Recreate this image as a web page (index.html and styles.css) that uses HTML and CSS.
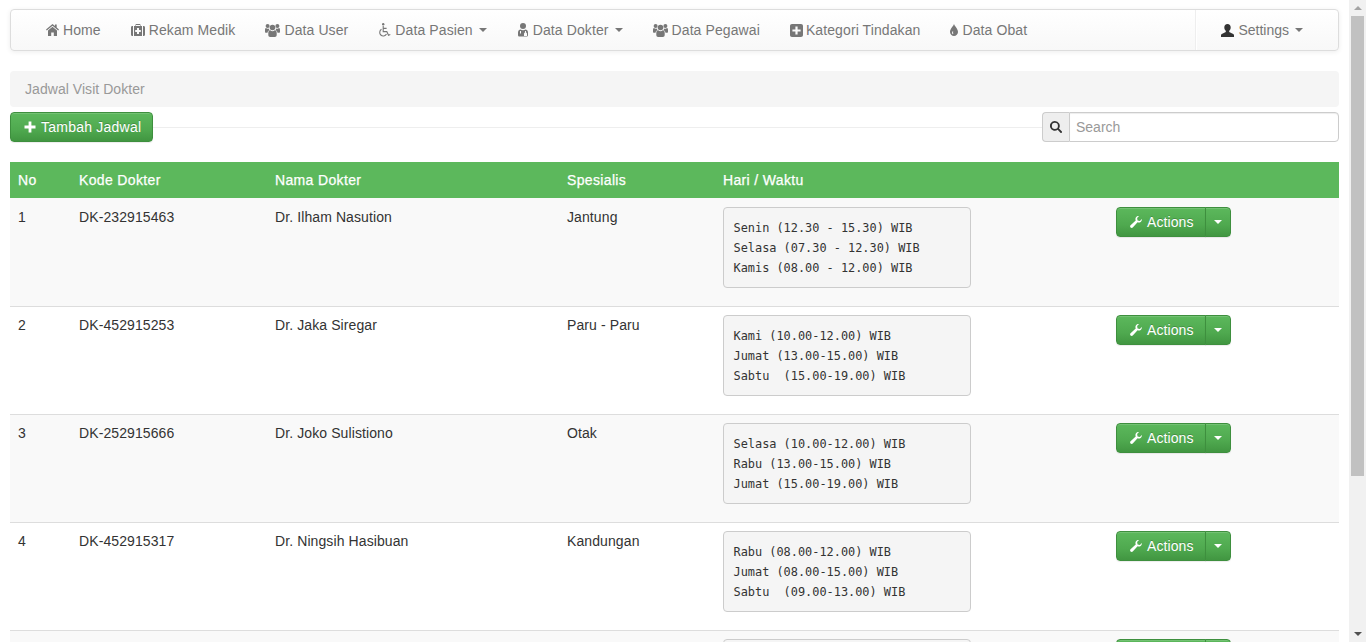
FILE: index.html
```html
<!DOCTYPE html>
<html lang="id">
<head>
<meta charset="utf-8">
<title>Jadwal Visit Dokter</title>
<link rel="stylesheet" href="styles.css">
</head>
<body>
<div class="page">
  <nav class="navbar">
    <ul class="nav">
      <li><a href="#"><svg class="ic w13" viewBox="0 0 13 12"><path d="M6.5 0 0 5.6l.8.9L6.5 1.700l5.700 4.800.8-.9-2.300-2V.6H9v1.500z"/><path d="M2 6.600 6.500 2.800 11 6.600V12H7.800V8.400H5.200V12H2z"/></svg>Home</a></li>
      <li><a href="#"><svg class="ic w14" viewBox="0 0 14 12"><path d="M4.500 2V.8C4.500.3 4.900 0 5.300 0h3.400c.4 0 .8.3.8.8V2H9V.9H5V2z"/><path d="M0 3.500C0 2.600.5 2 1.300 2H2v10h-.7C.5 12 0 11.400 0 10.500zM12 2h.7c.8 0 1.300.6 1.300 1.500v7c0 .9-.5 1.500-1.300 1.500H12z"/><path fill-rule="evenodd" d="M3 2h8v10H3zM6 4v2H4.200v2H6v2h2V8h1.800V6H8V4z"/></svg>Rekam Medik</a></li>
      <li><a href="#"><svg class="ic w15" viewBox="0 0 15 13"><circle cx="7.500" cy="3.500" r="2.800"/><circle cx="2.600" cy="2" r="2"/><circle cx="12.400" cy="2" r="2"/><path d="M3.300 9C3.300 7 4.300 6.300 5.300 6.300c.6.600 1.300.9 2.200.9s1.600-.3 2.200-.9c1 0 2 .7 2 2.700v2c0 1.300-.8 2-1.800 2H5.100c-1 0-1.800-.7-1.800-2z"/><path d="M0 6c0-1.400.6-2 1-2 .5.500 1 .7 1.700.7.400 0 .8-.1 1.100-.2 0 .8.400 1.400.9 1.800C3.600 6.600 2.700 7.500 2.500 8.700H1C.4 8.700 0 8.300 0 7.700zM15 6c0-1.400-.6-2-1-2-.5.500-1 .7-1.700.7-.4 0-.8-.1-1.100-.2 0 .8-.4 1.400-.9 1.800 1.100.3 2 1.200 2.200 2.400H14c.6 0 1-.4 1-1z"/></svg>Data User</a></li>
      <li><a href="#"><svg class="ic w13" viewBox="0 0 13 14"><circle cx="5.200" cy="1.300" r="1.200"/><path class="thin" d="M5.200 3v5.600h3.600l1.700 3.600 1.800-.7M5.200 5.400h3.400"/><path class="thin" d="M3.500 6.300a3.600 3.600 0 1 0 5 4.800"/></svg>Data Pasien<span class="caret"></span></a></li>
      <li><a href="#"><svg class="ic w12" viewBox="0 0 12 14"><circle cx="6" cy="3" r="3"/><path fill-rule="evenodd" d="M1 9.500C1 7.500 2.300 6.500 3.500 6.500c.7.500 1.500.8 2.500.8s1.800-.3 2.500-.8c1.200 0 2.500 1 2.500 3V12c0 1-.7 1.500-1.500 1.500h-7C1.700 13.500 1 13 1 12zM3 8v2.500h1V8zM8 8v1.300L7 10.500V13h3v-2.500L9 9.300V8z"/></svg>Data Dokter<span class="caret"></span></a></li>
      <li><a href="#"><svg class="ic w15" viewBox="0 0 15 13"><circle cx="7.500" cy="3.500" r="2.800"/><circle cx="2.600" cy="2" r="2"/><circle cx="12.400" cy="2" r="2"/><path d="M3.300 9C3.300 7 4.300 6.300 5.300 6.300c.6.600 1.300.9 2.200.9s1.600-.3 2.200-.9c1 0 2 .7 2 2.700v2c0 1.300-.8 2-1.800 2H5.100c-1 0-1.800-.7-1.800-2z"/><path d="M0 6c0-1.400.6-2 1-2 .5.500 1 .7 1.700.7.400 0 .8-.1 1.100-.2 0 .8.400 1.400.9 1.800C3.600 6.600 2.700 7.500 2.500 8.700H1C.4 8.700 0 8.300 0 7.700zM15 6c0-1.400-.6-2-1-2-.5.500-1 .7-1.700.7-.4 0-.8-.1-1.100-.2 0 .8-.4 1.400-.9 1.800 1.100.3 2 1.200 2.200 2.400H14c.6 0 1-.4 1-1z"/></svg>Data Pegawai</a></li>
      <li><a href="#"><svg class="ic w12b" viewBox="0 0 13 13"><path fill-rule="evenodd" d="M2 0h9c1.200 0 2 .8 2 2v9c0 1.200-.8 2-2 2H2c-1.200 0-2-.8-2-2V2C0 .8.800 0 2 0zM5.400 2.500v3h-3v2h3v3h2.200v-3h3v-2h-3v-3z"/></svg>Kategori Tindakan</a></li>
      <li><a href="#"><svg class="ic w8" viewBox="0 0 8 12"><path fill-rule="evenodd" d="M4 0c.5 2 4 4.800 4 8 0 2.300-1.800 4-4 4S0 10.300 0 8C0 4.800 3.500 2 4 0zM2.700 7.300C2 8 1.700 9.300 2.800 10.300l.6-.5c-.6-.7-.4-1.500-.1-2z"/></svg>Data Obat</a></li>
    </ul>
    <ul class="nav nav-right">
      <li><a href="#"><svg class="ic w13 dark" viewBox="0 0 13 13"><path d="M6.500 0c2 0 3.200 1.400 3.200 3.400 0 1.500-.7 2.800-1.500 3.400v1.300l4 1.900c.5.300.8.700.8 1.300V13H0v-1.700c0-.6.300-1 .8-1.300l4-1.900V6.800C4 6.200 3.300 4.900 3.300 3.400 3.300 1.400 4.500 0 6.500 0z"/></svg>Settings<span class="caret"></span></a></li>
    </ul>
  </nav>

  <div class="breadcrumb">Jadwal Visit Dokter</div>

  <div class="toolbar">
    <a class="btn btn-add" href="#"><svg class="ic w12 light" viewBox="0 0 12 12"><path d="M4.600 .5h2.800v4.100h4.100v2.800H7.400v4.100H4.600V7.400H.5V4.600h4.100z"/></svg>Tambah Jadwal</a>
    <div class="rule"></div>
    <div class="search">
      <span class="addon"><svg class="ic w12 dark" viewBox="0 0 13 13"><path fill-rule="evenodd" d="M5.300 0a5.300 5.300 0 0 1 4.400 8.200l3 3c.4.400.4 1 0 1.400-.4.400-1 .4-1.400 0l-3-3A5.300 5.300 0 1 1 5.300 0zm0 2a3.300 3.300 0 1 0 0 6.600 3.300 3.300 0 0 0 0-6.600z"/></svg></span>
      <input class="search-input" type="text" placeholder="Search">
    </div>
  </div>

  <table class="table">
    <colgroup>
      <col class="c-no"><col class="c-kode"><col class="c-nama"><col class="c-spes"><col class="c-hari"><col class="c-act">
    </colgroup>
    <thead>
      <tr><th>No</th><th>Kode Dokter</th><th>Nama Dokter</th><th>Spesialis</th><th>Hari / Waktu</th><th></th></tr>
    </thead>
    <tbody>
      <tr>
        <td>1</td><td>DK-232915463</td><td>Dr. Ilham Nasution</td><td>Jantung</td>
        <td><pre>Senin (12.30 - 15.30) WIB
Selasa (07.30 - 12.30) WIB
Kamis (08.00 - 12.00) WIB</pre></td>
        <td><div class="btn-group"><a class="btn" href="#"><svg class="ic w12 light" viewBox="0 0 13 13"><path d="M12.800 3.200c.3 1.600-.4 3-1.700 3.600-1 .5-2 .4-2.900 0L3 12.400c-.7.700-1.800.7-2.400 0-.7-.6-.7-1.700 0-2.400l5.600-5.200c-.4-.9-.5-1.900 0-2.900C6.800.6 8.300-.2 9.800.1L7.700 2.300l.5 2.500 2.500.5z"/></svg>Actions</a><a class="btn btn-split" href="#"><span class="caret caret-light"></span></a></div></td>
      </tr>
      <tr>
        <td>2</td><td>DK-452915253</td><td>Dr. Jaka Siregar</td><td>Paru - Paru</td>
        <td><pre>Kami (10.00-12.00) WIB
Jumat (13.00-15.00) WIB
Sabtu  (15.00-19.00) WIB</pre></td>
        <td><div class="btn-group"><a class="btn" href="#"><svg class="ic w12 light" viewBox="0 0 13 13"><path d="M12.800 3.200c.3 1.600-.4 3-1.700 3.600-1 .5-2 .4-2.900 0L3 12.400c-.7.700-1.800.7-2.400 0-.7-.6-.7-1.700 0-2.400l5.600-5.200c-.4-.9-.5-1.900 0-2.900C6.800.6 8.300-.2 9.800.1L7.700 2.300l.5 2.500 2.500.5z"/></svg>Actions</a><a class="btn btn-split" href="#"><span class="caret caret-light"></span></a></div></td>
      </tr>
      <tr>
        <td>3</td><td>DK-252915666</td><td>Dr. Joko Sulistiono</td><td>Otak</td>
        <td><pre>Selasa (10.00-12.00) WIB
Rabu (13.00-15.00) WIB
Jumat (15.00-19.00) WIB</pre></td>
        <td><div class="btn-group"><a class="btn" href="#"><svg class="ic w12 light" viewBox="0 0 13 13"><path d="M12.800 3.200c.3 1.600-.4 3-1.700 3.600-1 .5-2 .4-2.900 0L3 12.400c-.7.700-1.800.7-2.400 0-.7-.6-.7-1.700 0-2.400l5.600-5.200c-.4-.9-.5-1.900 0-2.900C6.800.6 8.300-.2 9.800.1L7.700 2.300l.5 2.500 2.500.5z"/></svg>Actions</a><a class="btn btn-split" href="#"><span class="caret caret-light"></span></a></div></td>
      </tr>
      <tr>
        <td>4</td><td>DK-452915317</td><td>Dr. Ningsih Hasibuan</td><td>Kandungan</td>
        <td><pre>Rabu (08.00-12.00) WIB
Jumat (08.00-15.00) WIB
Sabtu  (09.00-13.00) WIB</pre></td>
        <td><div class="btn-group"><a class="btn" href="#"><svg class="ic w12 light" viewBox="0 0 13 13"><path d="M12.800 3.200c.3 1.600-.4 3-1.700 3.600-1 .5-2 .4-2.900 0L3 12.400c-.7.700-1.800.7-2.400 0-.7-.6-.7-1.700 0-2.400l5.600-5.200c-.4-.9-.5-1.900 0-2.900C6.800.6 8.300-.2 9.800.1L7.700 2.300l.5 2.500 2.500.5z"/></svg>Actions</a><a class="btn btn-split" href="#"><span class="caret caret-light"></span></a></div></td>
      </tr>
      <tr>
        <td></td><td></td><td></td><td></td>
        <td><pre class="pre-empty"></pre></td>
        <td><div class="btn-group"><a class="btn" href="#"></a><a class="btn btn-split" href="#"></a></div></td>
      </tr>
    </tbody>
  </table>
</div>

<div class="scrollbar" aria-hidden="true">
  <span class="arrow arrow-up"></span>
  <div class="thumb"></div>
  <span class="arrow arrow-down"></span>
</div>
</body>
</html>
```

FILE: styles.css
```css
* { box-sizing: border-box; }

html, body {
  margin: 0;
  height: 100%;
  overflow: hidden;
  background: #fff;
}

body {
  font-family: "Liberation Sans", Arial, sans-serif;
  font-size: 14px;
  line-height: 20px;
  color: #333;
}

a { text-decoration: none; }

.page {
  width: 1349px;
  padding: 9px 10px 0;
}

/* navbar */
.navbar {
  display: flex;
  justify-content: space-between;
  height: 42px;
  margin-bottom: 20px;
  border: 1px solid #ddd;
  border-radius: 4px;
  background: linear-gradient(to bottom, #fff 0%, #f8f8f8 100%);
  box-shadow: inset 0 1px 0 rgba(255,255,255,.15), 0 1px 5px rgba(0,0,0,.075);
}

.nav {
  display: flex;
  list-style: none;
  margin: 0;
  padding: 0 0 0 20px;
  letter-spacing: .1px;
}

.nav a {
  display: flex;
  align-items: center;
  height: 40px;
  padding: 0 15px;
  color: #777;
  white-space: nowrap;
}

.nav-right {
  padding: 0;
  letter-spacing: 0;
  border-left: 1px solid #eee;
  box-shadow: inset 1px 0 0 #fff;
}

.nav-right a { padding: 0 35px 0 25px; }

/* icons */
.ic {
  flex: none;
  display: block;
  height: auto;
  margin-right: 4px;
  fill: #777;
}

.w8 { width: 8px; }
.w12 { width: 12px; }
.w12b { width: 13px; margin-right: 3px; }
.w13 { width: 13px; }
.w14 { width: 14px; }
.w15 { width: 15px; }
.dark { fill: #333; }
.light { fill: #fff; }

.thin {
  fill: none;
  stroke: #777;
  stroke-width: 1.100;
}

.caret {
  width: 0;
  height: 0;
  margin-left: 6px;
  border-top: 4px solid #777;
  border-left: 4px solid transparent;
  border-right: 4px solid transparent;
}

.caret-light {
  margin: 0;
  border-top-color: #fff;
}

/* breadcrumb */
.breadcrumb {
  padding: 8px 15px;
  margin-bottom: 5px;
  background: #f5f5f5;
  border-radius: 4px;
  color: #999;
  letter-spacing: .05px;
}

/* toolbar */
.toolbar {
  display: flex;
  align-items: center;
  height: 30px;
  margin-bottom: 20px;
}

.rule {
  flex: 1;
  height: 1px;
  background: #eee;
}

.btn {
  display: flex;
  align-items: center;
  height: 30px;
  padding: 0 11px 0 13px;
  border: 1px solid #3e8f3e;
  border-radius: 4px;
  color: #fff;
  white-space: nowrap;
  text-shadow: 0 -1px 0 rgba(0,0,0,.2);
  background: linear-gradient(to bottom, #5cb85c 0%, #4fa94f 60%, #419641 100%);
  box-shadow: inset 0 1px 0 rgba(255,255,255,.15), 0 1px 1px rgba(0,0,0,.075);
}

.btn .ic { margin-right: 5px; }
.btn-add { letter-spacing: .23px; }

.search {
  display: flex;
  width: 297px;
  height: 30px;
}

.addon {
  display: flex;
  align-items: center;
  width: 27px;
  padding-left: 7px;
  background: #eee;
  border: 1px solid #ccc;
  border-right: 0;
  border-radius: 4px 0 0 4px;
}

.search-input {
  flex: 1;
  min-width: 0;
  padding: 0 6px;
  border: 1px solid #ccc;
  border-radius: 0 4px 4px 0;
  font: inherit;
  color: #555;
  background: #fff;
  box-shadow: inset 0 1px 1px rgba(0,0,0,.075);
  outline: 0;
}

.search-input::placeholder { color: #999; opacity: 1; }

/* table */
.table {
  width: 1329px;
  table-layout: fixed;
  border-collapse: separate;
  border-spacing: 0;
}

.c-no { width: 61px; }
.c-kode { width: 196px; }
.c-nama { width: 292px; }
.c-spes { width: 156px; }
.c-hari { width: 393px; }
.c-act { width: 231px; }

th {
  padding: 8px;
  height: 36px;
  text-align: left;
  font-weight: normal;
  letter-spacing: .35px;
  -webkit-text-stroke: .25px #fff;
  color: #fff;
  background: #5cb85c;
}

td {
  padding: 8px;
  vertical-align: top;
  border-top: 1px solid #ddd;
  letter-spacing: .1px;
}

tbody tr:first-child td { border-top-color: #f9f9f9; }
tbody tr:nth-child(odd) td { background: #f9f9f9; }

pre {
  display: block;
  width: 248px;
  margin: 0 0 10px;
  padding: 9.500px;
  border: 1px solid #ccc;
  border-radius: 4px;
  background: #f5f5f5;
  color: #333;
  font-family: "DejaVu Sans Mono", "Liberation Mono", monospace;
  font-size: 11.900px;
  line-height: 20px;
  letter-spacing: 0;
  white-space: pre;
}

.pre-empty { height: 81px; }

.btn-group {
  display: flex;
  width: 115px;
}

.btn-group .btn:first-child {
  flex: 1;
  border-radius: 4px 0 0 4px;
}

.btn-split {
  flex: none;
  width: 26px;
  padding: 0;
  justify-content: center;
  margin-left: -1px;
  border-radius: 0 4px 4px 0;
}

/* scrollbar painted in the reference */
.scrollbar {
  position: fixed;
  top: 0;
  right: 0;
  bottom: 0;
  width: 17px;
  display: flex;
  flex-direction: column;
  align-items: center;
  background: #f1f1f1;
}

.arrow {
  flex: none;
  width: 0;
  height: 0;
  border-left: 4px solid transparent;
  border-right: 4px solid transparent;
}

.arrow-up {
  margin-top: 6px;
  border-bottom: 4px solid #a3a3a3;
}

.arrow-down {
  margin-top: auto;
  margin-bottom: 6px;
  border-top: 4px solid #505050;
}

.thumb {
  flex: none;
  width: 13px;
  height: 460px;
  margin-top: 6px;
  background: #c1c1c1;
}
```
